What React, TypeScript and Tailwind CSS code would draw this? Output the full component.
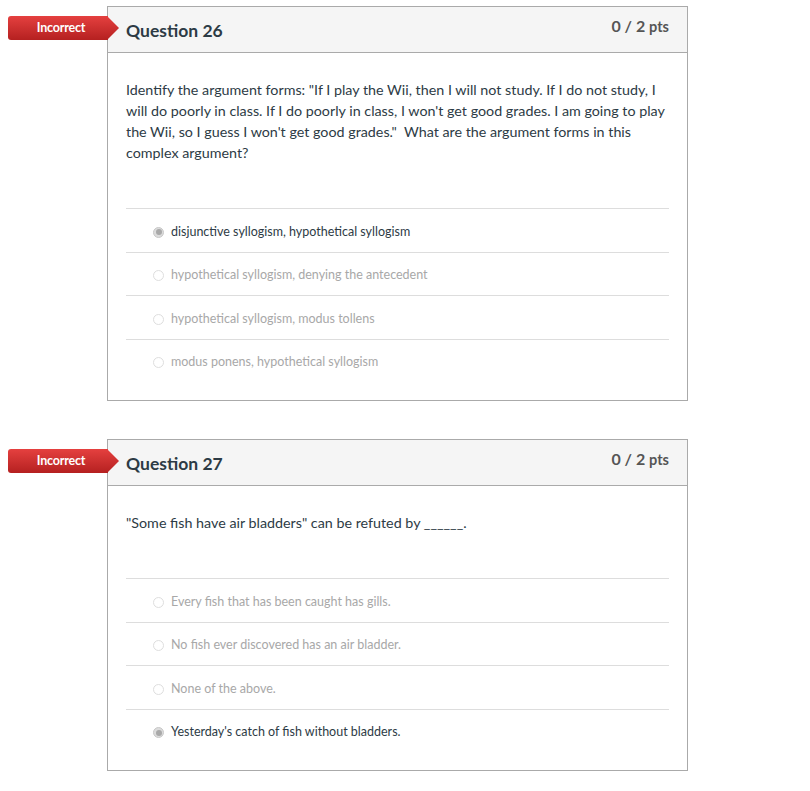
import React from 'react';

type Answer = { text: string; selected?: boolean };

const questions: {
  num: number;
  text: string;
  answers: Answer[];
}[] = [
  {
    num: 26,
    text: 'Identify the argument forms: "If I play the Wii, then I will not study. If I do not study, I will do poorly in class. If I do poorly in class, I won\'t get good grades. I am going to play the Wii, so I guess I won\'t get good grades."\u00a0 What are the argument forms in this complex argument?',
    answers: [
      { text: 'disjunctive syllogism, hypothetical syllogism', selected: true },
      { text: 'hypothetical syllogism, denying the antecedent' },
      { text: 'hypothetical syllogism, modus tollens' },
      { text: 'modus ponens, hypothetical syllogism' },
    ],
  },
  {
    num: 27,
    text: '"Some fish have air bladders" can be refuted by ______.',
    answers: [
      { text: 'Every fish that has been caught has gills.' },
      { text: 'No fish ever discovered has an air bladder.' },
      { text: 'None of the above.' },
      { text: "Yesterday's catch of fish without bladders.", selected: true },
    ],
  },
];

const Radio = ({ selected }: { selected?: boolean }) =>
  selected ? (
    <span className="w-[11px] h-[11px] rounded-full bg-[#dcdcdc] border border-[#c8c8c8] flex items-center justify-center shrink-0">
      <span className="w-[6px] h-[6px] rounded-full bg-[#a9a9a9]" />
    </span>
  ) : (
    <span className="w-[11px] h-[11px] rounded-full bg-white border border-[#dedede] shrink-0" />
  );

const IncorrectBadge = () => (
  <div className="absolute left-[-100px] top-[9px] flex items-center">
    <div className="h-[24px] w-[100px] pl-[6px] rounded-l-[3px] bg-gradient-to-b from-[#e5403f] to-[#b52020] flex items-center justify-center text-white text-[12.5px] font-bold tracking-[-0.2px]">
      Incorrect
    </div>
    <svg width="12" height="24" viewBox="0 0 12 24" className="block -ml-px">
      <defs>
        <linearGradient id="bg" x1="0" y1="0" x2="0" y2="1">
          <stop offset="0" stopColor="#e5403f" />
          <stop offset="1" stopColor="#b52020" />
        </linearGradient>
      </defs>
      <polygon points="0,0 12,12 0,24" fill="url(#bg)" />
    </svg>
  </div>
);

export default function App() {
  return (
    <div
      className="min-h-screen bg-white pt-[6px] pl-[107px] flex flex-col gap-[38px]"
      style={{ fontFamily: 'Lato, "Open Sans", sans-serif' }}
    >
      {questions.map((q) => (
        <div key={q.num} className="relative w-[581px] border border-[#aaaaaa]">
          <IncorrectBadge />
          <div className="h-[46px] bg-[#f5f5f5] border-b border-[#aaaaaa] flex justify-between pl-[18px] pr-[18px]">
            <div className="pt-[11px] text-[17.5px] font-bold text-[#2d3b45]">Question {q.num}</div>
            <div className="pt-[7px] text-[#555555] font-bold">
              <span className="text-[16px]">0 / 2</span>{' '}
              <span className="text-[14.5px]">pts</span>
            </div>
          </div>
          <div className="pl-[18px] pr-[18px] pb-[18px]">
            <p className="pt-[26px] text-[14.3px] leading-[21px] text-[#2d3b45]">{q.text}</p>
            <div className="mt-[45px]">
              {q.answers.map((a, i) => (
                <div
                  key={i}
                  className="h-[43.5px] pt-[4px] border-t border-[#dddddd] flex items-center gap-[7px] pl-[27px]"
                >
                  <Radio selected={a.selected} />
                  <span
                    className={`text-[12.5px] ${a.selected ? 'text-[#2d3b45]' : 'text-[#a8a8a8]'}`}
                  >
                    {a.text}
                  </span>
                </div>
              ))}
            </div>
          </div>
        </div>
      ))}
    </div>
  );
}
